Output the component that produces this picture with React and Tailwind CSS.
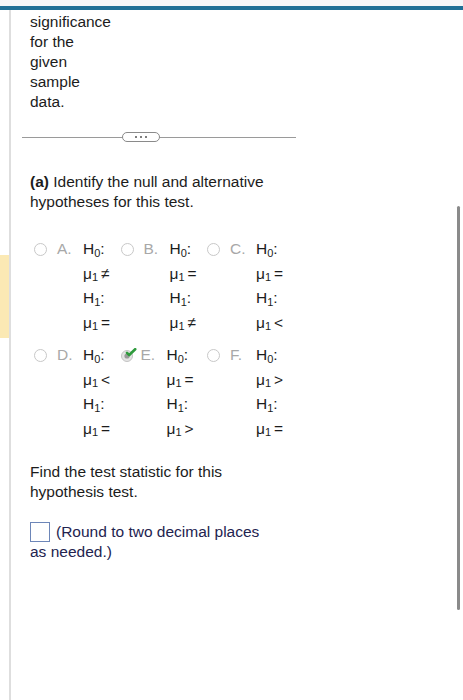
import React from "react";

const options = [
  { key: "A", h0: "≠", h1: "=" },
  { key: "B", h0: "=", h1: "≠" },
  { key: "C", h0: "=", h1: "<" },
  { key: "D", h0: "<", h1: "=" },
  { key: "E", h0: "=", h1: ">", selected: true },
  { key: "F", h0: ">", h1: "=" },
];

function Radio({ selected }) {
  if (selected) {
    return (
      <svg width="18" height="14" viewBox="0 0 18 14" className="shrink-0 -ml-[1px] mr-[3px]">
        <circle cx="7" cy="8" r="5.5" fill="#e4e4e4" stroke="#c4c4c4" strokeWidth="1" />
        <circle cx="7" cy="8" r="2.6" fill="#9a9a9a" />
        <path d="M7 4.8 L9.2 7 L15.2 1.2" fill="none" stroke="#2e9a3c" strokeWidth="2.6" strokeLinecap="round" strokeLinejoin="round" />
      </svg>
    );
  }
  return (
    <span className="shrink-0 w-[13px] h-[13px] rounded-full border border-[#c8c8c8] bg-white mr-[10px] mt-[1px]" />
  );
}

function Mu({ sign }) {
  return (
    <div className="h-[24.5px] leading-[24.5px] whitespace-nowrap">
      <span>
        μ<sub className="text-[11px]">1</sub>
        <span className="ml-[3px]">{sign}</span>
      </span>
    </div>
  );
}

function H({ n }) {
  return (
    <div className="h-[24.5px] leading-[24.5px] whitespace-nowrap">
      <span>
        H<sub className="text-[11px]">{n}</sub>:
      </span>
    </div>
  );
}

function Option({ opt }) {
  return (
    <div className="flex items-start w-[86.5px]">
      <div className="h-[24.5px] flex items-center">
        <Radio selected={opt.selected} />
        <span className="w-[26px] text-[#a8a8a8]">{opt.key}.</span>
      </div>
      <div className="flex flex-col">
        <H n="0" />
        <Mu sign={opt.h0} />
        <H n="1" />
        <Mu sign={opt.h1} />
      </div>
    </div>
  );
}

export default function App() {
  return (
    <div className="relative w-[463px] h-[700px] bg-white overflow-hidden font-['Liberation_Sans',Arial,sans-serif] text-[15.5px] leading-[20px] text-[#1c1c1c]">
      <div className="h-[6px] bg-[#f4f6f8]" />
      <div className="h-[4px] bg-[#1f6f96]" />
      <div className="flex h-[690px]">
        <div className="w-[9px] shrink-0 flex flex-col">
          <div className="h-[245px]" />
          <div className="h-[83px] bg-[#fbe9b4]" />
        </div>
        <div className="flex-1 border-l-2 border-[#dedede] pl-[19px] pt-[2px]">
          <div>significance</div>
          <div>for the</div>
          <div>given</div>
          <div>sample</div>
          <div>data.</div>

          <div className="relative ml-[-8px] w-[274px] h-[10px] mt-[20px] flex items-center">
            <div className="h-px w-full bg-[#9a9a9a]" />
            <div className="absolute left-[100px] top-0 w-[38px] h-[10px] rounded-full border border-[#8a8a8a] bg-white flex items-center justify-center gap-[3px]">
              <span className="w-[2px] h-[2px] rounded-full bg-[#555]" />
              <span className="w-[2px] h-[2px] rounded-full bg-[#555]" />
              <span className="w-[2px] h-[2px] rounded-full bg-[#555]" />
            </div>
          </div>

          <p className="mt-[30px]">
            <b>(a)</b> Identify the null and alternative
            <br />
            hypotheses for this test.
          </p>

          <div className="mt-[25px] pl-[4px] flex flex-col gap-[8px]">
            <div className="flex">
              {options.slice(0, 3).map((o) => (
                <Option key={o.key} opt={o} />
              ))}
            </div>
            <div className="flex">
              {options.slice(3).map((o) => (
                <Option key={o.key} opt={o} />
              ))}
            </div>
          </div>

          <p className="mt-[21px]">
            Find the test statistic for this
            <br />
            hypothesis test.
          </p>

          <div className="mt-[20px] text-[#23234f]">
            <span className="inline-block align-[-5px] w-[20px] h-[20px] border border-[#6d86b8] mr-[6px]" />
            (Round to two decimal places
            <br />
            as needed.)
          </div>
        </div>
      </div>
      <div className="absolute left-[457px] top-[206px] w-[3px] h-[404px] rounded-full bg-[#8a8a8a]" />
    </div>
  );
}
